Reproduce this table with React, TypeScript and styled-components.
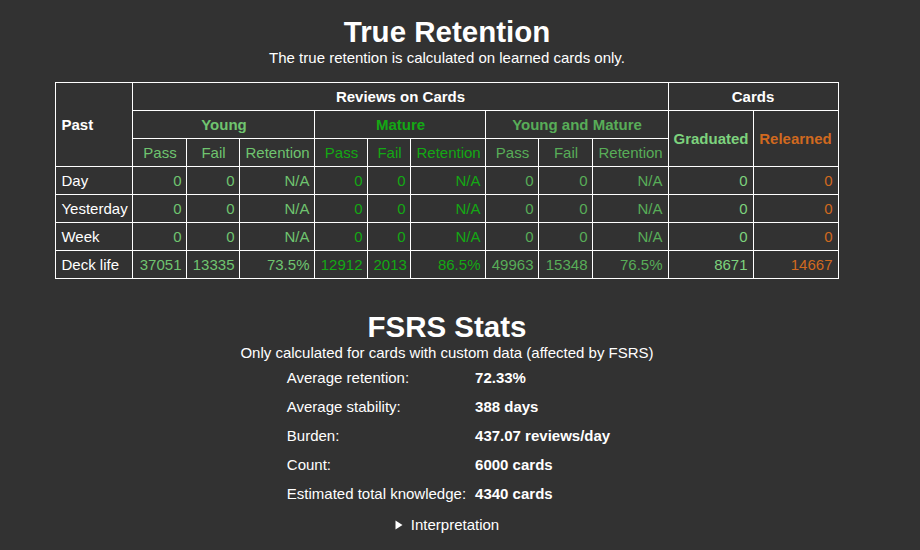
import React from "react";
import styled, { createGlobalStyle } from "styled-components";

const Global = createGlobalStyle`
  html, body { margin: 0; padding: 0; background: #323232; }
  body { font-family: "Liberation Sans", Arial, Helvetica, sans-serif; color: #fff; }
`;

const Page = styled.div`
  width: 894px;
  min-height: 550px;
  padding-top: 15px;
  box-sizing: border-box;
  display: flex;
  flex-direction: column;
  align-items: center;
  text-align: center;
`;

const Title = styled.h1<{ $top?: number }>`
  margin: ${(p) => p.$top ?? 0}px 0 0;
  font-size: 29.5px;
  line-height: 34px;
  font-weight: bold;
`;

const Sub = styled.div`
  font-size: 15px;
  line-height: 17px;
`;

const Table = styled.table`
  margin-top: 16px;
  border-collapse: collapse;
  table-layout: fixed;
  width: 782px;
  font-size: 15px;
`;

type Tone = "white" | "young" | "mature" | "total" | "grad" | "relearn";
const tones: Record<Tone, string> = {
  white: "#ffffff",
  young: "#6fc46f",
  mature: "#14a814",
  total: "#58ad58",
  grad: "#7dd27d",
  relearn: "#d0691f",
};

const Th = styled.th<{ $tone?: Tone; $left?: boolean; $bold?: boolean }>`
  border: 1px solid #fff;
  height: 27px;
  padding: 0 5px;
  font-weight: ${(p) => (p.$bold === false ? "normal" : "bold")};
  color: ${(p) => tones[p.$tone ?? "white"]};
  text-align: ${(p) => (p.$left ? "left" : "center")};
  white-space: nowrap;
`;

const Td = styled.td<{ $tone?: Tone; $left?: boolean }>`
  border: 1px solid #fff;
  height: 27px;
  padding: 0 5px;
  color: ${(p) => tones[p.$tone ?? "white"]};
  text-align: ${(p) => (p.$left ? "left" : "right")};
  white-space: nowrap;
`;

const Stats = styled.div`
  margin-top: 2px;
  margin-left: 3px;
  display: grid;
  grid-template-columns: auto auto;
  column-gap: 9px;
  grid-auto-rows: 29px;
  align-items: center;
  text-align: left;
  font-size: 15px;
  line-height: 17px;
`;

const Label = styled.div``;
const Value = styled.div`
  font-weight: bold;
`;

const Summary = styled.div`
  margin-top: 8px;
  display: flex;
  align-items: center;
  gap: 8px;
  font-size: 15px;
  line-height: 17px;
`;

const widths = [77, 54, 53, 75, 53, 43, 75, 53, 54, 75, 85, 85];

const rows: [string, string[]][] = [
  ["Day", ["0", "0", "N/A", "0", "0", "N/A", "0", "0", "N/A", "0", "0"]],
  ["Yesterday", ["0", "0", "N/A", "0", "0", "N/A", "0", "0", "N/A", "0", "0"]],
  ["Week", ["0", "0", "N/A", "0", "0", "N/A", "0", "0", "N/A", "0", "0"]],
  ["Deck life", ["37051", "13335", "73.5%", "12912", "2013", "86.5%", "49963", "15348", "76.5%", "8671", "14667"]],
];

const colTones: Tone[] = ["young", "young", "young", "mature", "mature", "mature", "total", "total", "total", "grad", "relearn"];

const stats: [string, string][] = [
  ["Average retention:", "72.33%"],
  ["Average stability:", "388 days"],
  ["Burden:", "437.07 reviews/day"],
  ["Count:", "6000 cards"],
  ["Estimated total knowledge:", "4340 cards"],
];

export default function App() {
  const groups: [string, Tone][] = [["Young", "young"], ["Mature", "mature"], ["Young and Mature", "total"]];
  return (
    <>
      <Global />
      <Page>
        <Title>True Retention</Title>
        <Sub>The true retention is calculated on learned cards only.</Sub>
        <Table>
          <colgroup>
            {widths.map((w, i) => (
              <col key={i} style={{ width: w }} />
            ))}
          </colgroup>
          <thead>
            <tr>
              <Th rowSpan={3} $left>Past</Th>
              <Th colSpan={9}>Reviews on Cards</Th>
              <Th colSpan={2}>Cards</Th>
            </tr>
            <tr>
              {groups.map(([g, t]) => (
                <Th key={g} colSpan={3} $tone={t}>{g}</Th>
              ))}
              <Th rowSpan={2} $tone="grad">Graduated</Th>
              <Th rowSpan={2} $tone="relearn">Relearned</Th>
            </tr>
            <tr>
              {groups.map(([g, t]) =>
                ["Pass", "Fail", "Retention"].map((h) => (
                  <Th key={g + h} $tone={t} $bold={false}>{h}</Th>
                ))
              )}
            </tr>
          </thead>
          <tbody>
            {rows.map(([label, vals]) => (
              <tr key={label}>
                <Td $left>{label}</Td>
                {vals.map((v, i) => (
                  <Td key={i} $tone={colTones[i]}>{v}</Td>
                ))}
              </tr>
            ))}
          </tbody>
        </Table>
        <Title $top={31}>FSRS Stats</Title>
        <Sub>Only calculated for cards with custom data (affected by FSRS)</Sub>
        <Stats>
          {stats.map(([l, v]) => (
            <React.Fragment key={l}>
              <Label>{l}</Label>
              <Value>{v}</Value>
            </React.Fragment>
          ))}
        </Stats>
        <Summary>
          <svg width="8" height="10" viewBox="0 0 8 10">
            <path d="M0.5 0.5 L7.5 5 L0.5 9.5 Z" fill="#fff" />
          </svg>
          <span>Interpretation</span>
        </Summary>
      </Page>
    </>
  );
}
